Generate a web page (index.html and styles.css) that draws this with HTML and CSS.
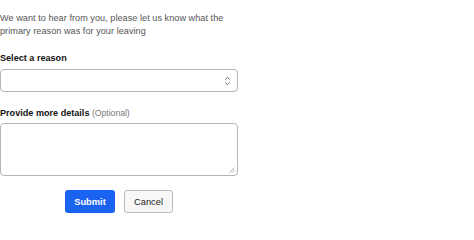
FILE: index.html
```html
<!DOCTYPE html>
<html>
<head>
<meta charset="utf-8">
<link rel="stylesheet" href="styles.css">
</head>
<body>
<form class="form">
  <p class="intro">We want to hear from you, please let us know what the primary reason was for your leaving</p>
  <label class="label">Select a reason</label>
  <div class="select">
    <svg class="chev" width="7" height="10" viewBox="0 0 7 10"><path d="M1.2 3.6 L3.5 1.3 L5.8 3.6 M1.2 6.4 L3.5 8.7 L5.8 6.4" fill="none" stroke="#555" stroke-width="0.9"/></svg>
  </div>
  <label class="label label-2">Provide more details <span class="opt">(Optional)</span></label>
  <div class="textarea">
    <svg class="grip" width="6" height="6" viewBox="0 0 6 6"><path d="M5.5 0.5 L0.5 5.5 M5.5 3 L3 5.5" stroke="#999" stroke-width="0.8"/></svg>
  </div>
  <div class="actions">
    <button type="button" class="btn btn-primary">Submit</button>
    <button type="button" class="btn btn-secondary">Cancel</button>
  </div>
</form>
</body>
</html>
```
FILE: styles.css
```css
html, body { margin: 0; padding: 0; background: #fff; }
body { font-family: "Liberation Sans", Arial, sans-serif; }
.form { width: 238px; padding-top: 12px; display: flex; flex-direction: column; }
.intro { margin: 0; font-size: 9.1px; line-height: 13px; color: #555; letter-spacing: 0.05px; }
.label { display: block; margin-top: 14px; font-size: 9.1px; font-weight: 700; color: #111; line-height: 12px; }
.label-2 { margin-top: 15px; }
.opt { font-weight: 400; color: #777; font-size: 8.6px; }
.select { margin-top: 5px; height: 21px; border: 1px solid #b5b5b5; border-radius: 4px; display: flex; align-items: center; justify-content: flex-end; padding-right: 6px; }
.chev { display: block; }
.textarea { margin-top: 4px; height: 51px; border: 1px solid #b5b5b5; border-radius: 4px; position: relative; }
.grip { position: absolute; right: 2px; bottom: 2px; }
.actions { display: flex; justify-content: center; gap: 9px; margin-top: 14px; }
.btn { font-family: inherit; font-size: 9.3px; height: 23px; border-radius: 3px; padding: 0; }
.btn-primary { width: 50px; background: #1a62f0; color: #fff; border: none; font-weight: 700; }
.btn-secondary { width: 49px; background: #f7f7f7; color: #222; border: 1px solid #bbb; }
```
